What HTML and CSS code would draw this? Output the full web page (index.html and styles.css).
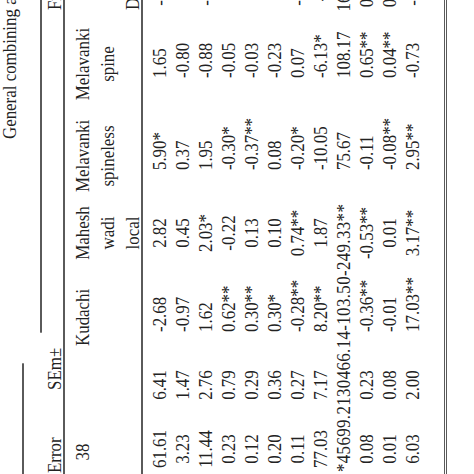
FILE: index.html
```html
<!DOCTYPE html>
<html lang="en">
<head>
<meta charset="utf-8">
<title>General combining ability effects</title>
<link rel="stylesheet" href="styles.css">
</head>
<body>
<div class="frame">
  <div class="sheet">
    <div class="inner">
      <div class="top">
        <div class="top-left"></div>
        <div class="top-right"><span class="title">General combining ability effects of parents for yield and yield attributing traits</span></div>
      </div>

      <div class="row hrow1">
        <div class="c1 h-error">Error</div>
        <div class="c2 h-sem">SEm±</div>
        <div class="c7 h-edge">Fruit yield</div>
      </div>

      <div class="row hrow2">
        <div class="c1 h-df">38</div>
        <div class="c3 h-kud">Kudachi</div>
        <div class="c4 h-mah">Mahesh<br>wadi<br>local</div>
        <div class="c5 h-mel1">Melavanki<br>spineless</div>
        <div class="c6 h-mel2">Melavanki<br>spine</div>
        <div class="c7 h-edge"><br><br>Days</div>
      </div>

      <div class="body">
        <div class="row drow"><div class="c1">61.61</div><div class="c2">6.41</div><div class="c3">-2.68</div><div class="c4">2.82</div><div class="c5">5.90*</div><div class="c6">1.65</div><div class="c7">-4.31*</div></div>
        <div class="row drow"><div class="c1">3.23</div><div class="c2">1.47</div><div class="c3">-0.97</div><div class="c4">0.45</div><div class="c5">0.37</div><div class="c6">-0.80</div><div class="c7">1.12</div></div>
        <div class="row drow"><div class="c1">11.44</div><div class="c2">2.76</div><div class="c3">1.62</div><div class="c4">2.03*</div><div class="c5">1.95</div><div class="c6">-0.88</div><div class="c7">-3.86*</div></div>
        <div class="row drow"><div class="c1">0.23</div><div class="c2">0.79</div><div class="c3">0.62**</div><div class="c4">-0.22</div><div class="c5">-0.30*</div><div class="c6">-0.05</div><div class="c7">0.21</div></div>
        <div class="row drow"><div class="c1">0.12</div><div class="c2">0.29</div><div class="c3">0.30**</div><div class="c4">0.13</div><div class="c5">-0.37**</div><div class="c6">-0.03</div><div class="c7">0.14</div></div>
        <div class="row drow"><div class="c1">0.20</div><div class="c2">0.36</div><div class="c3">0.30*</div><div class="c4">0.10</div><div class="c5">0.08</div><div class="c6">-0.23</div><div class="c7">0.09</div></div>
        <div class="row drow"><div class="c1">0.11</div><div class="c2">0.27</div><div class="c3">-0.28**</div><div class="c4">0.74**</div><div class="c5">-0.20*</div><div class="c6">0.07</div><div class="c7">-0.41*</div></div>
        <div class="row drow"><div class="c1">77.03</div><div class="c2">7.17</div><div class="c3">8.20**</div><div class="c4">1.87</div><div class="c5">-10.05</div><div class="c6">-6.13*</div><div class="c7">-2.64</div></div>
        <div class="row drow"><div class="c1-4 run">*45699.2130466.14-103.50-249.33**</div><div class="c5">75.67</div><div class="c6">108.17</div><div class="c7">162.05*</div></div>
        <div class="row drow"><div class="c1">0.08</div><div class="c2">0.23</div><div class="c3">-0.36**</div><div class="c4">-0.53**</div><div class="c5">-0.11</div><div class="c6">0.65**</div><div class="c7">0.37**</div></div>
        <div class="row drow"><div class="c1">0.01</div><div class="c2">0.08</div><div class="c3">-0.01</div><div class="c4">0.01</div><div class="c5">-0.08**</div><div class="c6">0.04**</div><div class="c7">0.02**</div></div>
        <div class="row drow"><div class="c1">6.03</div><div class="c2">2.00</div><div class="c3">17.03**</div><div class="c4">3.17**</div><div class="c5">2.95**</div><div class="c6">-0.73</div><div class="c7">-3.08*</div></div>
      </div>
    </div>
  </div>
</div>
</body>
</html>
```

FILE: styles.css
```css
* {
  box-sizing: border-box;
}

html,
body {
  margin: 0;
  padding: 0;
  background: #ffffff;
}

.frame {
  width: 474px;
  height: 474px;
  overflow: hidden;
}

/* the printed table is turned a quarter turn counter-clockwise */
.sheet {
  width: 474px;
  height: 474px;
  transform: rotate(-90deg);
}

/* the scan is slightly condensed along the lines of text */
.inner {
  width: 526.67px;
  height: 474px;
  transform: scaleX(0.9);
  transform-origin: 0 0;
  font-family: "Liberation Serif", "Times New Roman", serif;
  font-size: 18.8px;
  color: #222222;
  white-space: nowrap;
}

.top {
  display: flex;
  height: 42px;
}

.top-left {
  flex: none;
  width: 123.33px;
  height: 24px;
  border-bottom: 2px solid #5a5a5a;
}

.top-right {
  flex: none;
  width: 470px;
  height: 42px;
  margin-left: 33.33px;
  padding-left: 215.5px;
  line-height: 19px;
  border-bottom: 2px solid #5a5a5a;
}

.row {
  display: grid;
  grid-template-columns: 55.56px 86.67px 80px 91.11px 100px 97.78px 111.11px;
  width: 622.23px;
}

.c1 { grid-column: 1; }
.c2 { grid-column: 2; }
.c3 { grid-column: 3; }
.c4 { grid-column: 4; }
.c5 { grid-column: 5; }
.c6 { grid-column: 6; }
.c7 { grid-column: 7; }
.c1-4 { grid-column: 1 / 5; }

/* header band 1 */
.hrow1 {
  height: 23px;
  padding-top: 3px;
  line-height: 19px;
  border-bottom: 2px solid #5a5a5a;
}

.h-error {
  padding-left: 1.1px;
}

.h-sem {
  padding-left: 37.8px;
}

.h-edge {
  padding-left: 4.4px;
}

/* header band 2 */
.hrow2 {
  height: 78px;
  padding-top: 5px;
  line-height: 25px;
  border-bottom: 2px solid #5a5a5a;
}

.h-df {
  text-align: center;
  padding-right: 6.7px;
}

.h-mah {
  text-align: center;
}

.h-mel1 {
  text-align: center;
  padding-right: 20px;
}

.h-mel2 {
  text-align: center;
  padding-right: 13.3px;
}

/* body */
.body {
  padding-top: 5px;
  padding-bottom: 20px;
  border-bottom: 3px double #5a5a5a;
}

.drow {
  height: 23px;
  line-height: 23px;
}

.drow .c1,
.drow .c2,
.drow .c4 {
  text-align: center;
}

.drow .c3 {
  padding-left: 15.6px;
}

.drow .c5 {
  padding-left: 24.4px;
}

.drow .c6 {
  padding-left: 26.7px;
}

.drow .c7 {
  text-align: center;
  padding-right: 44.4px;
}

.drow .run {
  padding-left: 2.2px;
  letter-spacing: 0.4px;
}
```
